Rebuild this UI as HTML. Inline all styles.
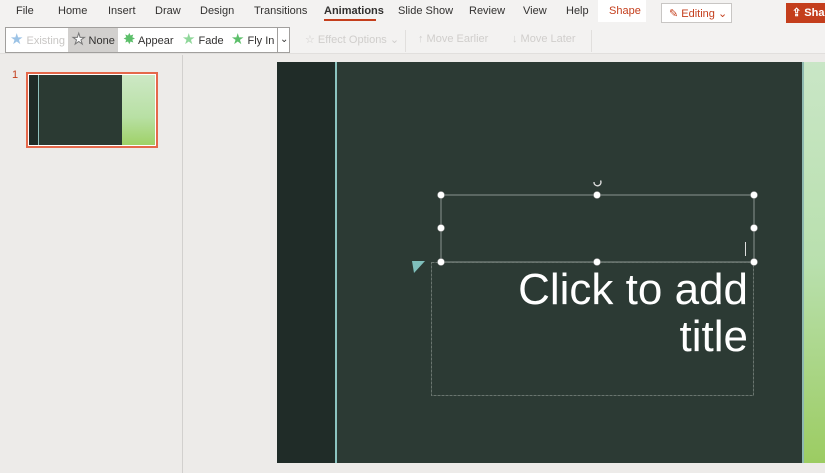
<!DOCTYPE html>
<html><head><style>
*{margin:0;padding:0;box-sizing:border-box}
body{width:825px;height:473px;overflow:hidden;background:#edebe9;font-family:"Liberation Sans",sans-serif;position:relative;font-size:11px;color:#323130}
.abs{position:absolute;white-space:nowrap}
.tab{position:absolute;top:5px;font-size:11px;color:#323130}
.star{display:inline-block;font-size:15px;line-height:1}
</style></head><body>
<div class="abs" style="left:0;top:0;width:825px;height:26px;background:#f3f2f1"></div>
<div class="tab" style="left:16px">File</div>
<div class="tab" style="left:58px">Home</div>
<div class="tab" style="left:108px">Insert</div>
<div class="tab" style="left:155px">Draw</div>
<div class="tab" style="left:200px">Design</div>
<div class="tab" style="left:254px">Transitions</div>
<div class="tab" style="left:324px;font-weight:bold">Animations</div>
<div class="abs" style="left:324px;top:19px;width:52px;height:2px;background:#c43e1c"></div>
<div class="tab" style="left:398px">Slide Show</div>
<div class="tab" style="left:469px">Review</div>
<div class="tab" style="left:523px">View</div>
<div class="tab" style="left:566px">Help</div>
<div class="abs" style="left:598px;top:0;width:48px;height:22px;background:#fff"></div>
<div class="tab" style="left:609px;color:#c43e1c">Shape</div>
<div class="abs" style="left:661px;top:3px;width:71px;height:20px;border:1px solid #c8c6c4;background:#fff;color:#c43e1c;font-size:11px;padding:3px 0 0 7px">✎ Editing ⌄</div>
<div class="abs" style="left:786px;top:3px;width:45px;height:20px;background:#c43e1c;color:#fff;font-weight:bold;padding:3px 0 0 6px;overflow:hidden">⇪ Share</div>
<!-- ribbon -->
<div class="abs" style="left:0;top:26px;width:825px;height:28px;background:#f3f2f1;border-bottom:1px solid #e1dfdd"></div>
<div class="abs" style="left:5px;top:27px;width:285px;height:26px;border:1px solid #a19f9d;background:#fff"></div>
<div class="abs" style="left:68px;top:28px;width:50px;height:24px;background:#d2d0ce"></div>
<div class="abs" style="left:10px;top:32px;color:#c8c6c4"><span class="star" style="color:#9cc3e6">★</span> Existing</div>
<div class="abs" style="left:72px;top:32px"><span class="star" style="color:#fff;-webkit-text-stroke:1px #777">★</span> None</div>
<div class="abs" style="left:123px;top:32px"><span class="star" style="color:#5cbf6a">✸</span> Appear</div>
<div class="abs" style="left:182px;top:32px"><span class="star" style="color:#8fd79a">★</span> Fade</div>
<div class="abs" style="left:231px;top:32px"><span class="star" style="color:#5cbf6a">★</span> Fly In</div>
<div class="abs" style="left:277px;top:28px;width:12px;height:24px;border-left:1px solid #a19f9d;font-size:10px;padding:6px 0 0 2px">⌄</div>
<div class="abs" style="left:305px;top:33px;color:#d0cecc">☆ Effect Options ⌄</div>
<div class="abs" style="left:405px;top:30px;width:1px;height:22px;background:#e1dfdd"></div>
<div class="abs" style="left:418px;top:33px;color:#d0cecc">↑ Move Earlier</div>
<div class="abs" style="left:512px;top:33px;color:#d0cecc">↓ Move Later</div>
<div class="abs" style="left:591px;top:30px;width:1px;height:22px;background:#e1dfdd"></div>
<!-- left panel -->
<div class="abs" style="left:182px;top:55px;width:1px;height:418px;background:#d2d0ce"></div>
<div class="abs" style="left:12px;top:69px;color:#c43e1c;font-size:11px">1</div>
<div class="abs" style="left:26px;top:72px;width:132px;height:76px;border:2px solid #e5684b;padding:1px;background:#fff">
 <div style="position:relative;width:100%;height:100%;background:#2b3a33">
  <div class="abs" style="left:0;top:0;width:9px;height:100%;background:#1f2b27"></div>
  <div class="abs" style="left:9px;top:0;width:1px;height:100%;background:#8fc1bd"></div>
  <div class="abs" style="left:93px;top:0;width:33px;height:100%;background:linear-gradient(180deg,#cde8c5,#b8e0a4 60%,#9fd167)"></div>
 </div>
</div>
<!-- slide -->
<div class="abs" style="left:277px;top:62px;width:548px;height:401px;background:#2c3a34">
 <div class="abs" style="left:0;top:0;width:58px;height:401px;background:#202c28"></div>
 <div class="abs" style="left:58px;top:0;width:2px;height:401px;background:#8cc4c0"></div>
 <div class="abs" style="left:525px;top:0;width:2px;height:401px;background:#8fb9b0"></div>
 <div class="abs" style="left:527px;top:0;width:21px;height:401px;background:linear-gradient(180deg,#c9e6c6,#b9e0ae 50%,#9ccc62)"></div>
</div>
<svg class="abs" style="left:0;top:0" width="825" height="473">
 <rect x="441" y="195" width="313" height="67" fill="none" stroke="#8a948f" stroke-width="1"/>
 <rect x="431.5" y="262.5" width="322" height="133" fill="none" stroke="#6a756f" stroke-dasharray="3,1"/>
 <polygon points="412,261 425,261 414,273" fill="#7fbfbb"/>
 <line x1="745.5" y1="242" x2="745.5" y2="256" stroke="#ddd"/>
 <g fill="#fff" stroke="#999" stroke-width="0.5">
  <circle cx="441" cy="195" r="3.5"/><circle cx="597" cy="195" r="3.5"/><circle cx="754" cy="195" r="3.5"/>
  <circle cx="441" cy="228" r="3.5"/><circle cx="754" cy="228" r="3.5"/>
  <circle cx="441" cy="262" r="3.5"/><circle cx="597" cy="262" r="3.5"/><circle cx="754" cy="262" r="3.5"/>
 </g>
 <path d="M600.5 180.5 A3.5 3.5 0 1 1 594 182" fill="none" stroke="#ddd" stroke-width="1.3"/>
 <text x="748" y="304" text-anchor="end" fill="#fff" font-family="Liberation Sans" font-size="44">Click to add</text>
 <text x="748" y="351" text-anchor="end" fill="#fff" font-family="Liberation Sans" font-size="44">title</text>
</svg>
</body></html>
